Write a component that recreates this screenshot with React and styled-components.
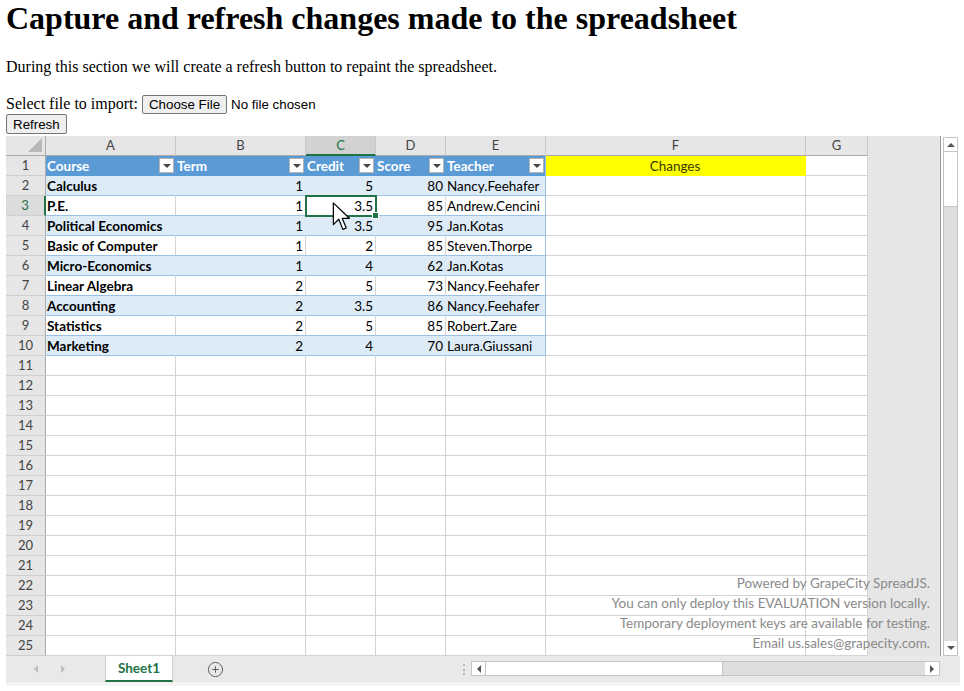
import React from 'react'
import styled, { createGlobalStyle } from 'styled-components'
import { CirclePlus } from 'lucide-react'

const GREEN = '#217346'
const GRID = '#d4d4d4'
const CELL_FONT = 'Lato, "Liberation Sans", sans-serif'

const COLS = [
  { key: 'A', w: 130 },
  { key: 'B', w: 130 },
  { key: 'C', w: 70 },
  { key: 'D', w: 70 },
  { key: 'E', w: 100 },
  { key: 'F', w: 260 },
  { key: 'G', w: 62 },
]

const HEAD = ['Course', 'Term', 'Credit', 'Score', 'Teacher']

const DATA = [
  ['Calculus', 1, 5, 80, 'Nancy.Feehafer'],
  ['P.E.', 1, 3.5, 85, 'Andrew.Cencini'],
  ['Political Economics', 1, 3.5, 95, 'Jan.Kotas'],
  ['Basic of Computer', 1, 2, 85, 'Steven.Thorpe'],
  ['Micro-Economics', 1, 4, 62, 'Jan.Kotas'],
  ['Linear Algebra', 2, 5, 73, 'Nancy.Feehafer'],
  ['Accounting', 2, 3.5, 86, 'Nancy.Feehafer'],
  ['Statistics', 2, 5, 85, 'Robert.Zare'],
  ['Marketing', 2, 4, 70, 'Laura.Giussani'],
]

const ROW_COUNT = 25

const GlobalStyle = createGlobalStyle`
  body {
    margin: 0;
    padding: 0 6px;
    background: #fff;
    font-family: "Liberation Serif", "Times New Roman", serif;
    color: #000;
  }
`

const Title = styled.h1`
  margin: 0 0 21px;
  font-size: 32px;
  font-weight: bold;
  line-height: 37px;
`

const Intro = styled.p`
  margin: 0;
  font-size: 16px;
  line-height: 18px;
`

const ImportRow = styled.div`
  display: flex;
  align-items: center;
  gap: 4px;
  margin-top: 18px;
  height: 20px;
  font-size: 16px;
`

const Button = styled.button`
  font-family: "Liberation Sans", Arial, sans-serif;
  font-size: 13.33px;
  line-height: 15px;
  padding: 1px 6px;
  background: #efefef;
  color: #000;
  border: 1px solid #767676;
  border-radius: 2px;
`

const FileNote = styled.span`
  font-family: "Liberation Sans", Arial, sans-serif;
  font-size: 13.33px;
`

const RefreshRow = styled.div`
  margin-top: 0;
  height: 20px;
  display: flex;
`

const Workbook = styled.div`
  margin-top: 2px;
  width: 954px;
  height: 550px;
  display: flex;
  flex-direction: column;
  font-family: ${CELL_FONT};
`

const SheetArea = styled.div`
  display: flex;
  height: 520px;
`

const Viewport = styled.div`
  position: relative;
  flex: 1;
  background: #e6e6e6;
  overflow: hidden;
  border-right: 1px solid #9a9a9a;
`

const Grid = styled.div`
  display: grid;
  grid-template-columns: 40px ${COLS.map(c => c.w + 'px').join(' ')};
  grid-auto-rows: 20px;
  width: max-content;
`

const Corner = styled.div`
  position: relative;
  background: #e6e6e6;
  border-right: 1px solid #ababab;
  border-bottom: 1px solid #ababab;
  box-sizing: border-box;
  &::after {
    content: '';
    position: absolute;
    right: 3px;
    bottom: 3px;
    width: 0;
    height: 0;
    border-left: 14px solid transparent;
    border-bottom: 14px solid #b8b8b8;
  }
`

const ColHeader = styled.div`
  box-sizing: border-box;
  background: ${p => (p.$active ? '#d2d2d2' : '#e6e6e6')};
  color: ${p => (p.$active ? GREEN : '#444')};
  border-right: 1px solid #c8c8c8;
  border-bottom: ${p => (p.$active ? `2px solid ${GREEN}` : '1px solid #ababab')};
  font-size: 13px;
  line-height: 19px;
  text-align: center;
`

const RowHeader = styled.div`
  box-sizing: border-box;
  background: ${p => (p.$active ? '#dcdcdc' : '#e6e6e6')};
  color: ${p => (p.$active ? GREEN : '#444')};
  border-right: ${p => (p.$active ? `2px solid ${GREEN}` : '1px solid #ababab')};
  border-bottom: 1px solid #cfcfcf;
  font-size: 13px;
  line-height: 19px;
  text-align: center;
`

const bandBg = {
  head: '#5b9bd5',
  blue: '#ddebf7',
  white: '#fff',
  yellow: '#ffff00',
  plain: '#fff',
}

const Cell = styled.div`
  position: relative;
  box-sizing: border-box;
  display: flex;
  align-items: center;
  justify-content: ${p => (p.$right ? 'flex-end' : p.$center ? 'center' : 'space-between')};
  padding: 0 2px 0 1px;
  background: ${p => bandBg[p.$band]};
  color: ${p => (p.$band === 'head' ? '#fff' : p.$band === 'yellow' ? '#3a3a00' : '#000')};
  font-weight: ${p => (p.$bold ? 'bold' : 'normal')};
  font-size: 13.5px;
  white-space: nowrap;
  border-right: 1px solid
    ${p =>
      p.$edge ? '#9bc2e6' : p.$band === 'head' ? '#5b9bd5' : p.$band === 'blue' ? '#ddebf7' : p.$band === 'yellow' ? '#ffff00' : GRID};
  border-bottom: 1px solid
    ${p =>
      p.$band === 'head' ? '#5b9bd5' : p.$band === 'blue' || p.$band === 'white' ? '#9bc2e6' : p.$band === 'yellow' ? '#ffff00' : GRID};
  ${p =>
    p.$selected &&
    `
    outline: 2px solid ${GREEN};
    outline-offset: -1px;
    z-index: 2;
    &::after {
      content: '';
      position: absolute;
      right: -4px;
      bottom: -4px;
      width: 5px;
      height: 5px;
      background: ${GREEN};
      border: 1px solid #fff;
    }
  `}
`

const FilterButton = styled.span`
  flex: none;
  width: 13px;
  height: 13px;
  margin-right: -1px;
  background: #fff;
  border: 1px solid #b5b5b5;
  display: flex;
  align-items: center;
  justify-content: center;
  &::before {
    content: '';
    border-left: 4px solid transparent;
    border-right: 4px solid transparent;
    border-top: 4px solid #444;
  }
`

const Watermark = styled.div`
  position: absolute;
  right: 10px;
  bottom: 3px;
  text-align: right;
  color: #8a8a8a;
  font-size: 13.5px;
  line-height: 20px;
  pointer-events: none;
`

const Pointer = styled.svg`
  position: absolute;
  left: 326px;
  top: 65px;
  z-index: 3;
`

const VScroll = styled.div`
  width: 19px;
  display: flex;
  flex-direction: column;
  padding: 1px 2px 0 2px;
  box-sizing: border-box;
`

const ScrollTrack = styled.div`
  flex: 1;
  display: flex;
  flex-direction: ${p => (p.$horizontal ? 'row' : 'column')};
  background: #dedede;
  border: 1px solid #c4c4c4;
`

const ArrowBtn = styled.div`
  flex: none;
  width: ${p => (p.$horizontal ? '14px' : 'auto')};
  height: ${p => (p.$horizontal ? 'auto' : '14px')};
  background: #fff;
  display: flex;
  align-items: center;
  justify-content: center;
  &::before {
    content: '';
    ${p =>
      p.$dir === 'up'
        ? 'border-left: 4px solid transparent; border-right: 4px solid transparent; border-bottom: 4px solid #555;'
        : p.$dir === 'down'
        ? 'border-left: 4px solid transparent; border-right: 4px solid transparent; border-top: 4px solid #555;'
        : p.$dir === 'left'
        ? 'border-top: 4px solid transparent; border-bottom: 4px solid transparent; border-right: 4px solid #555;'
        : 'border-top: 4px solid transparent; border-bottom: 4px solid transparent; border-left: 4px solid #555;'}
  }
`

const Thumb = styled.div`
  flex: none;
  background: #fff;
  border: 1px solid #c4c4c4;
  margin: -1px;
  ${p => (p.$horizontal ? `width: ${p.$size}px;` : `height: ${p.$size}px;`)}
`

const Spacer = styled.div`
  flex: 1;
`

const TabBar = styled.div`
  height: 30px;
  display: flex;
  align-items: stretch;
  background: #e9e9e9;
  border-bottom: 4px solid #f4f4f4;
  box-sizing: border-box;
`

const NavArrows = styled.div`
  width: 99px;
  box-sizing: border-box;
  padding-left: 28px;
  display: flex;
  align-items: center;
  gap: 23px;
`

const NavArrow = styled.span`
  width: 0;
  height: 0;
  border-top: 4px solid transparent;
  border-bottom: 4px solid transparent;
  ${p => (p.$dir === 'left' ? 'border-right: 4px solid #bdbdbd;' : 'border-left: 4px solid #bdbdbd;')}
`

const SheetTab = styled.div`
  width: 68px;
  box-sizing: border-box;
  background: #fff;
  color: ${GREEN};
  font-weight: bold;
  font-size: 13.5px;
  display: flex;
  align-items: center;
  justify-content: center;
  border-left: 1px solid #cfcfcf;
  border-right: 1px solid #cfcfcf;
  border-bottom: 2px solid ${GREEN};
  margin-top: -1px;
`

const AddSheet = styled.div`
  width: 84px;
  display: flex;
  align-items: center;
  justify-content: center;
  color: #555;
`

const TabSpacer = styled.div`
  flex: 1;
`

const Splitter = styled.div`
  width: 14px;
  display: flex;
  align-items: center;
  justify-content: center;
  &::before {
    content: '';
    height: 11px;
    border-left: 2px dotted #b5b5b5;
  }
`

const HScroll = styled.div`
  width: 469px;
  display: flex;
  padding: 5px 20px 6px 0;
  box-sizing: content-box;
`

function HeaderRow() {
  return (
    <>
      <RowHeader>1</RowHeader>
      {HEAD.map((h, i) => (
        <Cell key={h} $band="head" $bold $edge={i === 4}>
          <span>{h}</span>
          <FilterButton />
        </Cell>
      ))}
      <Cell $band="yellow" $center>
        Changes
      </Cell>
      <Cell $band="plain" />
    </>
  )
}

function DataRow({ n, row }) {
  const band = n % 2 === 0 ? 'blue' : 'white'
  return (
    <>
      <RowHeader $active={n === 3}>{n}</RowHeader>
      {row.map((v, i) => (
        <Cell
          key={i}
          $band={band}
          $bold={i === 0}
          $right={typeof v === 'number'}
          $edge={i === 4}
          $selected={n === 3 && i === 2}
        >
          {v}
        </Cell>
      ))}
      <Cell $band="plain" />
      <Cell $band="plain" />
    </>
  )
}

function EmptyRow({ n }) {
  return (
    <>
      <RowHeader>{n}</RowHeader>
      {COLS.map(c => (
        <Cell key={c.key} $band="plain" />
      ))}
    </>
  )
}

export default function App() {
  const rows = []
  for (let n = 2; n <= ROW_COUNT; n++) {
    rows.push(
      n <= 10 ? <DataRow key={n} n={n} row={DATA[n - 2]} /> : <EmptyRow key={n} n={n} />
    )
  }

  return (
    <>
      <GlobalStyle />
      <Title>Capture and refresh changes made to the spreadsheet</Title>
      <Intro>During this section we will create a refresh button to repaint the spreadsheet.</Intro>
      <ImportRow>
        Select file to import:
        <Button>Choose File</Button>
        <FileNote>No file chosen</FileNote>
      </ImportRow>
      <RefreshRow>
        <Button>Refresh</Button>
      </RefreshRow>

      <Workbook>
        <SheetArea>
          <Viewport>
            <Grid>
              <Corner />
              {COLS.map(c => (
                <ColHeader key={c.key} $active={c.key === 'C'}>
                  {c.key}
                </ColHeader>
              ))}
              <HeaderRow />
              {rows}
            </Grid>
            <Watermark>
              Powered by GrapeCity SpreadJS.
              <br />
              You can only deploy this EVALUATION version locally.
              <br />
              Temporary deployment keys are available for testing.
              <br />
              Email us.sales@grapecity.com.
            </Watermark>
            <Pointer width="19" height="31" viewBox="0 0 14 22">
              <path
                d="M1 1 L1 17 L5 13 L8 20.5 L10.5 19.5 L7.5 12.3 L12.8 12.3 Z"
                fill="#fff"
                stroke="#000"
                strokeWidth="0.9"
                strokeLinejoin="round"
              />
            </Pointer>
          </Viewport>
          <VScroll>
            <ScrollTrack>
              <ArrowBtn $dir="up" />
              <Thumb $size={54} />
              <Spacer />
              <ArrowBtn $dir="down" />
            </ScrollTrack>
          </VScroll>
        </SheetArea>
        <TabBar>
          <NavArrows>
            <NavArrow $dir="left" />
            <NavArrow $dir="right" />
          </NavArrows>
          <SheetTab>Sheet1</SheetTab>
          <AddSheet>
            <CirclePlus size={17} strokeWidth={1.3} />
          </AddSheet>
          <TabSpacer />
          <Splitter />
          <HScroll>
            <ScrollTrack $horizontal>
              <ArrowBtn $horizontal $dir="left" />
              <Thumb $horizontal $size={236} />
              <Spacer />
              <ArrowBtn $horizontal $dir="right" />
            </ScrollTrack>
          </HScroll>
        </TabBar>
      </Workbook>
    </>
  )
}
